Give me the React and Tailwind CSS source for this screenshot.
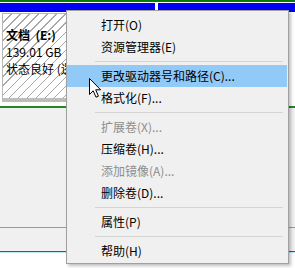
const items = [
  { t: '打开(O)' },
  { t: '资源管理器(E)' },
  'sep',
  { t: '更改驱动器号和路径(C)...', hl: true },
  { t: '格式化(F)...' },
  'sep',
  { t: '扩展卷(X)...', dis: true },
  { t: '压缩卷(H)...' },
  { t: '添加镜像(A)...', dis: true },
  { t: '删除卷(D)...' },
  'sep',
  { t: '属性(P)' },
  'sep',
  { t: '帮助(H)' },
]

function Cursor(){
  return (
    <svg className="absolute left-[88px] top-[77px]" width="14" height="22" viewBox="0 0 14 22">
      <path d="M1.5 1.5 L1.5 17.5 L5.2 13.8 L8 20.2 L10.4 19.2 L7.7 12.8 L12.6 12.8 Z" fill="#fff" stroke="#000" strokeWidth="1" strokeLinejoin="miter" />
    </svg>
  )
}

export default function App(){
  return (
    <div className="relative w-[295px] h-[268px] overflow-hidden bg-[#f0f0f0] font-['Noto_Sans_CJK_SC',sans-serif] text-[12px] text-black">
      {/* disk row */}
      <div className="flex flex-col h-[106px] bg-white">
        <div className="h-[2px] bg-[#0a7a0a]" />
        <div className="h-[1px] bg-white" />
        <div className="flex flex-1">
          <div className="w-[155px] flex flex-col">
            <div className="h-[9px] bg-[#0000f2]" />
            <div className="flex-1 bg-white pl-[2px] pr-[1px] pt-[1px] pb-[1px]">
              <div className="h-[89px] border border-[#b8b8b8] border-b-[4px] border-b-[#bdbdbd] bg-[repeating-linear-gradient(135deg,#ffffff_0px,#ffffff_5.4px,#a8a8a8_5.4px,#a8a8a8_6.4px)] pl-[3px] pt-[12px] leading-[17px] whitespace-nowrap overflow-hidden">
                <div className="font-bold">文档&nbsp;&nbsp;(E:)</div>
                <div>139.01 GB</div>
                <div>状态良好 (逻辑驱动器)</div>
              </div>
            </div>
          </div>
          <div className="w-[3px] bg-white" />
          <div className="flex-1 flex flex-col">
            <div className="h-[9px] bg-[#0000f2]" />
            <div className="flex-1 bg-white border-l border-[#c8c8c8]" />
          </div>
        </div>
        <div className="h-[2px] bg-white" />
      </div>
      <div className="h-[2px] bg-[#1f8a1f]" />
      <div className="h-[119px]" />
      <div className="h-[1px] bg-[#9a9a9a]" />
      <div className="h-[23px]" />
      <div className="h-[1px] bg-[#2d5f86]" />
      <div className="h-[1px] bg-[#bfe9f7]" />
      <div className="h-[20px] bg-white" />

      {/* context menu */}
      <div className="absolute left-[66px] top-[10px] w-[223px] h-[254px] border border-[#a0a0a0] bg-[#f0f0f0] pt-[3px] pr-[1px] shadow-[2px_2px_3px_rgba(0,0,0,0.25)]">
        {items.map((it, i) => it === 'sep' ? (
          <div key={i} className="h-[7px] flex items-center pl-[28px] pr-[4px]">
            <div className="h-[1px] w-full bg-[#d4d4d4]" />
          </div>
        ) : (
          <div key={i} className={`h-[22px] flex items-center pl-[34px] leading-none ${it.hl ? 'bg-[#91c9f7]' : ''} ${it.dis ? 'text-[#8d8d8d]' : 'text-black'}`}>
            {it.t}
          </div>
        ))}
      </div>

      <Cursor />
    </div>
  )
}
